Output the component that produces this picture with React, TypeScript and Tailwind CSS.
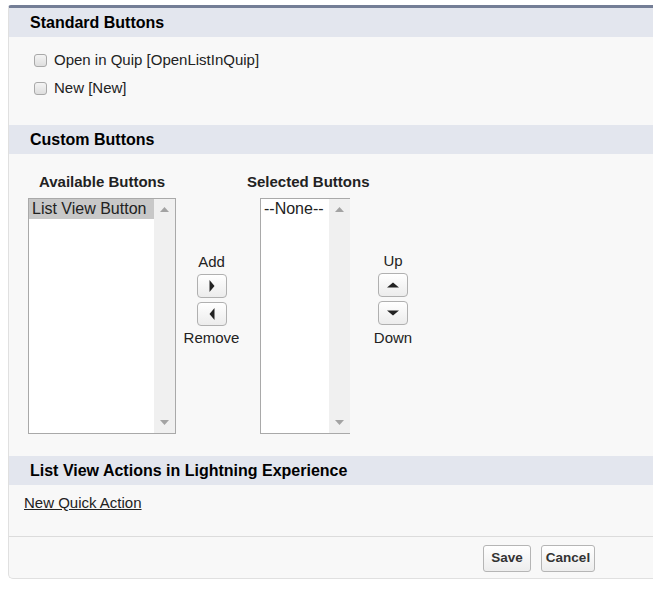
import React from "react";

const font = { fontFamily: '"Liberation Sans", Arial, sans-serif' };

function SectionHeader({ title }: { title: string }) {
  return (
    <div className="h-[29px] bg-[#e3e6ee] pl-[21px] flex items-center pt-[1px]">
      <h3 className="text-[16px] font-bold text-black">{title}</h3>
    </div>
  );
}

function Checkbox({ label }: { label: string }) {
  return (
    <label className="flex items-center h-[28px] text-[15px] text-[#222]">
      <span className="w-[13px] h-[13px] rounded-[3px] border border-[#a9a9a9] bg-gradient-to-b from-[#f4f4f4] to-[#dedede] ml-[25px] mr-[7px]" />
      {label}
    </label>
  );
}

function Listbox({ items, width, noRight }: { items: string[]; width: string; noRight?: boolean }) {
  return (
    <div
      className={`h-[236px] bg-white border border-[#a9a9a9] flex ${width} ${noRight ? "border-r-0" : ""}`}
    >
      <div className="flex-1 text-[16px] text-[#222] leading-[20px]">
        {items.map((it, i) => (
          <div key={i} className={i === 0 && it !== "--None--" ? "bg-[#c8c8c8] pl-[3px]" : "pl-[3px]"}>
            {it}
          </div>
        ))}
      </div>
      <div className="w-[21px] bg-[#f0f0f0] flex flex-col items-center justify-between py-[8px]">
        <svg width="9" height="5" viewBox="0 0 9 5">
          <path d="M0 5 L4.5 0 L9 5 Z" fill="#a3a3a3" />
        </svg>
        <svg width="9" height="5" viewBox="0 0 9 5">
          <path d="M0 0 L4.5 5 L9 0 Z" fill="#a3a3a3" />
        </svg>
      </div>
    </div>
  );
}

function ArrowButton({ dir }: { dir: "right" | "left" | "up" | "down" }) {
  const paths: Record<string, string> = {
    right: "M3.5 0 L8.5 6 L3.5 12 Z",
    left: "M8.5 0 L3.5 6 L8.5 12 Z",
    up: "M0 8.5 L6 3.5 L12 8.5 Z",
    down: "M0 3.5 L6 8.5 L12 3.5 Z",
  };
  return (
    <button className="w-[30px] h-[24px] rounded-[4px] border border-[#b0b0b0] bg-gradient-to-b from-white to-[#ececec] flex items-center justify-center">
      <svg width="12" height="12" viewBox="0 0 12 12">
        <path d={paths[dir]} fill="#222" />
      </svg>
    </button>
  );
}

export default function App() {
  return (
    <div className="w-[653px] h-[595px] bg-white overflow-hidden pt-[5px] pl-[8px]" style={font}>
      <div className="border-t-[3px] border-[#747e96] border-l border-b border-l-[#e0e0e0] border-b-[#e0e0e0] rounded-bl-[5px] rounded-tl-[3px] bg-[#f8f8f8] w-[660px]">
        <SectionHeader title="Standard Buttons" />
        <div className="h-[88px] pt-[9px]">
          <Checkbox label="Open in Quip [OpenListInQuip]" />
          <Checkbox label="New [New]" />
        </div>

        <SectionHeader title="Custom Buttons" />
        <div className="h-[302px] pt-[19px] pl-[19px] flex">
          <div className="w-[148px] flex flex-col items-center">
            <div className="text-[15px] font-bold text-[#222] h-[25px] leading-[17px] whitespace-nowrap">
              Available Buttons
            </div>
            <Listbox items={["List View Button"]} width="w-[148px]" />
          </div>
          <div className="w-[71px] flex flex-col items-center pt-[80px] text-[15px] text-[#222]">
            <div className="leading-[17px] mb-[4px]">Add</div>
            <div className="flex flex-col gap-[4px]">
              <ArrowButton dir="right" />
              <ArrowButton dir="left" />
            </div>
            <div className="leading-[17px] mt-[3px]">Remove</div>
          </div>
          <div className="w-[121px] flex flex-col">
            <div className="text-[15px] font-bold text-[#222] h-[25px] leading-[17px] whitespace-nowrap">
              Selected Buttons
            </div>
            <div className="pl-[13px]">
              <Listbox items={["--None--"]} width="w-[90px]" noRight />
            </div>
          </div>
          <div className="w-[50px] flex flex-col items-center pt-[79px] text-[15px] text-[#222]">
            <div className="leading-[17px] mb-[4px]">Up</div>
            <div className="flex flex-col gap-[4px]">
              <ArrowButton dir="up" />
              <ArrowButton dir="down" />
            </div>
            <div className="leading-[17px] mt-[4px]">Down</div>
          </div>
        </div>

        <SectionHeader title="List View Actions in Lightning Experience" />
        <div className="h-[51px] pl-[15px] pt-[6px]">
          <a href="#" className="text-[15px] text-[#222] underline">
            New Quick Action
          </a>
        </div>
        <div className="border-t border-[#dcdcdc] h-[42px] flex items-center pl-[474px] gap-[10px] pt-[1px]">
          <button className="h-[27px] w-[48px] rounded-[3px] border border-[#b5b5b5] bg-gradient-to-b from-white to-[#ededed] text-[13.5px] font-bold text-[#333]">
            Save
          </button>
          <button className="h-[27px] w-[54px] rounded-[3px] border border-[#b5b5b5] bg-gradient-to-b from-white to-[#ededed] text-[13.5px] font-bold text-[#333]">
            Cancel
          </button>
        </div>
      </div>
    </div>
  );
}
